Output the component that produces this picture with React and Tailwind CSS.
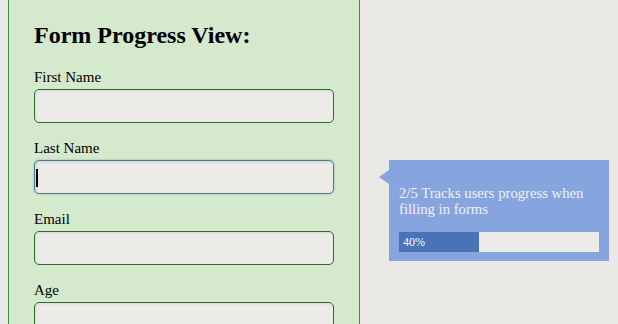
const fields = ["First Name", "Last Name", "Email", "Age"];

const Field = ({ label, focused }) => (
  <div className="mb-[17px]">
    <label className="block text-[15px] leading-[17px] text-black mb-[3px]">{label}</label>
    <div className="relative">
      <input
        type="text"
        readOnly
        className={
          focused
            ? "block w-[300px] h-[34px] rounded-[5px] border-[1.5px] border-[#4a7c90] bg-[#edebe8] shadow-[inset_1px_1px_3px_rgba(0,0,0,0.12),0_0_2px_rgba(79,127,147,0.6)] outline-none"
            : "block w-[300px] h-[34px] rounded-[5px] border-[1.5px] border-[#2a6e2f] bg-[#edebe8] shadow-[inset_1px_1px_3px_rgba(0,0,0,0.08)] outline-none"
        }
      />
      {focused && <span className="absolute left-[2px] top-[9px] w-[2px] h-[18px] bg-black" />}
    </div>
  </div>
);

export default function App() {
  return (
    <div
      className="flex items-start h-[324px] w-[618px] overflow-hidden bg-[#ebe9e5]"
      style={{ fontFamily: '"Liberation Serif", "Times New Roman", serif' }}
    >
      <div className="ml-[8px] w-[352px] h-[324px] border-x border-[#3d8c40] bg-[#d5e9cd] px-[25px] pt-[21px] shrink-0">
        <h1 className="text-[24px] leading-[28px] font-bold text-black mb-[20px]">Form Progress View:</h1>
        {fields.map((f) => (
          <Field key={f} label={f} focused={f === "Last Name"} />
        ))}
      </div>

      <div className="relative mt-[160px] ml-[29px] w-[220px] bg-[#86a5df] px-[10px] pt-[25px] pb-[9px]">
        <span className="absolute -left-[10px] top-[10px] w-0 h-0 border-y-[7px] border-y-transparent border-r-[10px] border-r-[#86a5df]" />
        <p className="text-[14.7px] leading-[16px] text-[#f1f1f1]">2/5 Tracks users progress when filling in forms</p>
        <div className="mt-[15px] flex h-[20px] w-[200px] bg-[#edebe8]">
          <div className="flex items-center w-[40%] bg-[#4a72b6] pl-[4px] text-[12px] text-white">40%</div>
        </div>
      </div>
    </div>
  );
}
